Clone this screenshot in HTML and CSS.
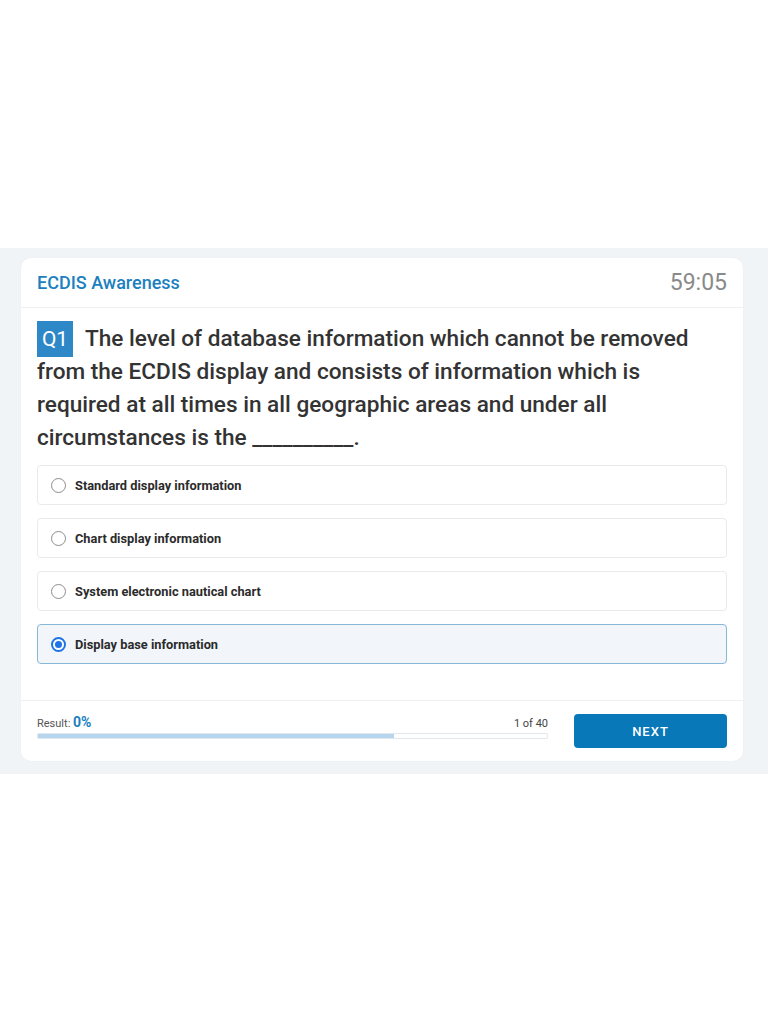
FILE: index.html
```html
<!DOCTYPE html>
<html>
<head>
<meta charset="utf-8">
<link rel="stylesheet" href="styles.css">
</head>
<body>
<div class="top-space"></div>
<div class="band">
  <div class="card">
    <div class="card-header">
      <div class="title">ECDIS Awareness</div>
      <div class="timer">59:05</div>
    </div>
    <div class="card-body">
      <p class="question"><span class="qnum">Q1</span>The level of database information which cannot be removed from the ECDIS display and consists of information which is required at all times in all geographic areas and under all circumstances is the __________.</p>
      <div class="options">
        <label class="option"><span class="radio"></span><span class="opt-text">Standard display information</span></label>
        <label class="option"><span class="radio"></span><span class="opt-text">Chart display information</span></label>
        <label class="option"><span class="radio"></span><span class="opt-text">System electronic nautical chart</span></label>
        <label class="option selected"><span class="radio checked"></span><span class="opt-text">Display base information</span></label>
      </div>
    </div>
    <div class="card-footer">
      <div class="progress-area">
        <div class="progress-labels">
          <div class="result">Result: <span class="pct">0%</span></div>
          <div class="count">1 of 40</div>
        </div>
        <div class="track"><div class="fill" style="width:70%"></div></div>
      </div>
      <button class="next">NEXT</button>
    </div>
  </div>
</div>
</body>
</html>
```
FILE: styles.css
```css
* { box-sizing: border-box; }
html, body { margin: 0; padding: 0; background: #ffffff; }
body { font-family: Roboto, "Liberation Sans", Arial, sans-serif; color: #333; }
.top-space { height: 248px; }
.band {
  background: #f1f4f7;
  padding: 10px 25px 13px 21px;
}
.card {
  background: #fff;
  border-radius: 10px;
  box-shadow: 0 0 2px rgba(0,0,0,0.04);
}
.card-header {
  height: 50px;
  display: flex;
  align-items: center;
  justify-content: space-between;
  padding: 0 16px;
  border-bottom: 1px solid #eef1f4;
}
.title { color: #1b7fc0; font-size: 18px; font-weight: 500; }
.timer { color: #8a8a8a; font-size: 23px; font-weight: 400; }
.card-body { padding: 14px 16px 36px 16px; }
.question {
  margin: 0;
  font-size: 22.6px;
  font-weight: 500;
  line-height: 33px;
  color: #333;
}
.qnum {
  float: left;
  margin: -1px 12px -4px 0;
  background: #2e87c6;
  color: #fff;
  font-weight: 400;
  font-size: 21px;
  width: 36px;
  height: 36px;
  line-height: 36px;
  text-align: center;
}
.options { margin-top: 11px; display: flex; flex-direction: column; gap: 13px; }
.option {
  display: flex;
  align-items: center;
  height: 40px;
  border: 1px solid #e8ebee;
  border-radius: 4px;
  padding-left: 13px;
  background: #fff;
}
.option.selected { background: #f2f6fa; border-color: #86b8d8; }
.radio {
  width: 15px; height: 15px;
  border: 1px solid #8c8c8c;
  border-radius: 50%;
  margin-right: 9px;
  position: relative;
  background: #fff;
}
.radio.checked { border: 2px solid #1e74e6; }
.radio.checked::after {
  content: "";
  position: absolute;
  left: 2px; top: 2px;
  width: 7px; height: 7px;
  border-radius: 50%;
  background: #1e74e6;
}
.opt-text { font-size: 12.8px; font-weight: 700; color: #2b2b2b; }
.card-footer {
  border-top: 1px solid #eef1f4;
  display: flex;
  align-items: center;
  padding: 13px 16px 13px 16px;
  gap: 26px;
}
.progress-area { flex: 1; padding-bottom: 8px; }
.progress-labels { display: flex; justify-content: space-between; align-items: baseline; line-height: 15px; }
.result { font-size: 11px; color: #555; }
.pct { font-size: 14px; font-weight: 700; color: #1b7fc0; }
.count { font-size: 11px; color: #444; }
.track {
  margin-top: 2px;
  height: 6px;
  border: 1px solid #dfe8ef;
  border-radius: 2px;
  background: #fff;
  overflow: hidden;
}
.fill { height: 100%; background: #b7d5ec; }
.next {
  width: 153px;
  height: 34px;
  border: none;
  border-radius: 4px;
  background: #0878b8;
  color: #fff;
  font-family: Roboto, "Liberation Sans", Arial, sans-serif;
  font-size: 13px;
  font-weight: 500;
  letter-spacing: 1px;
}
```
